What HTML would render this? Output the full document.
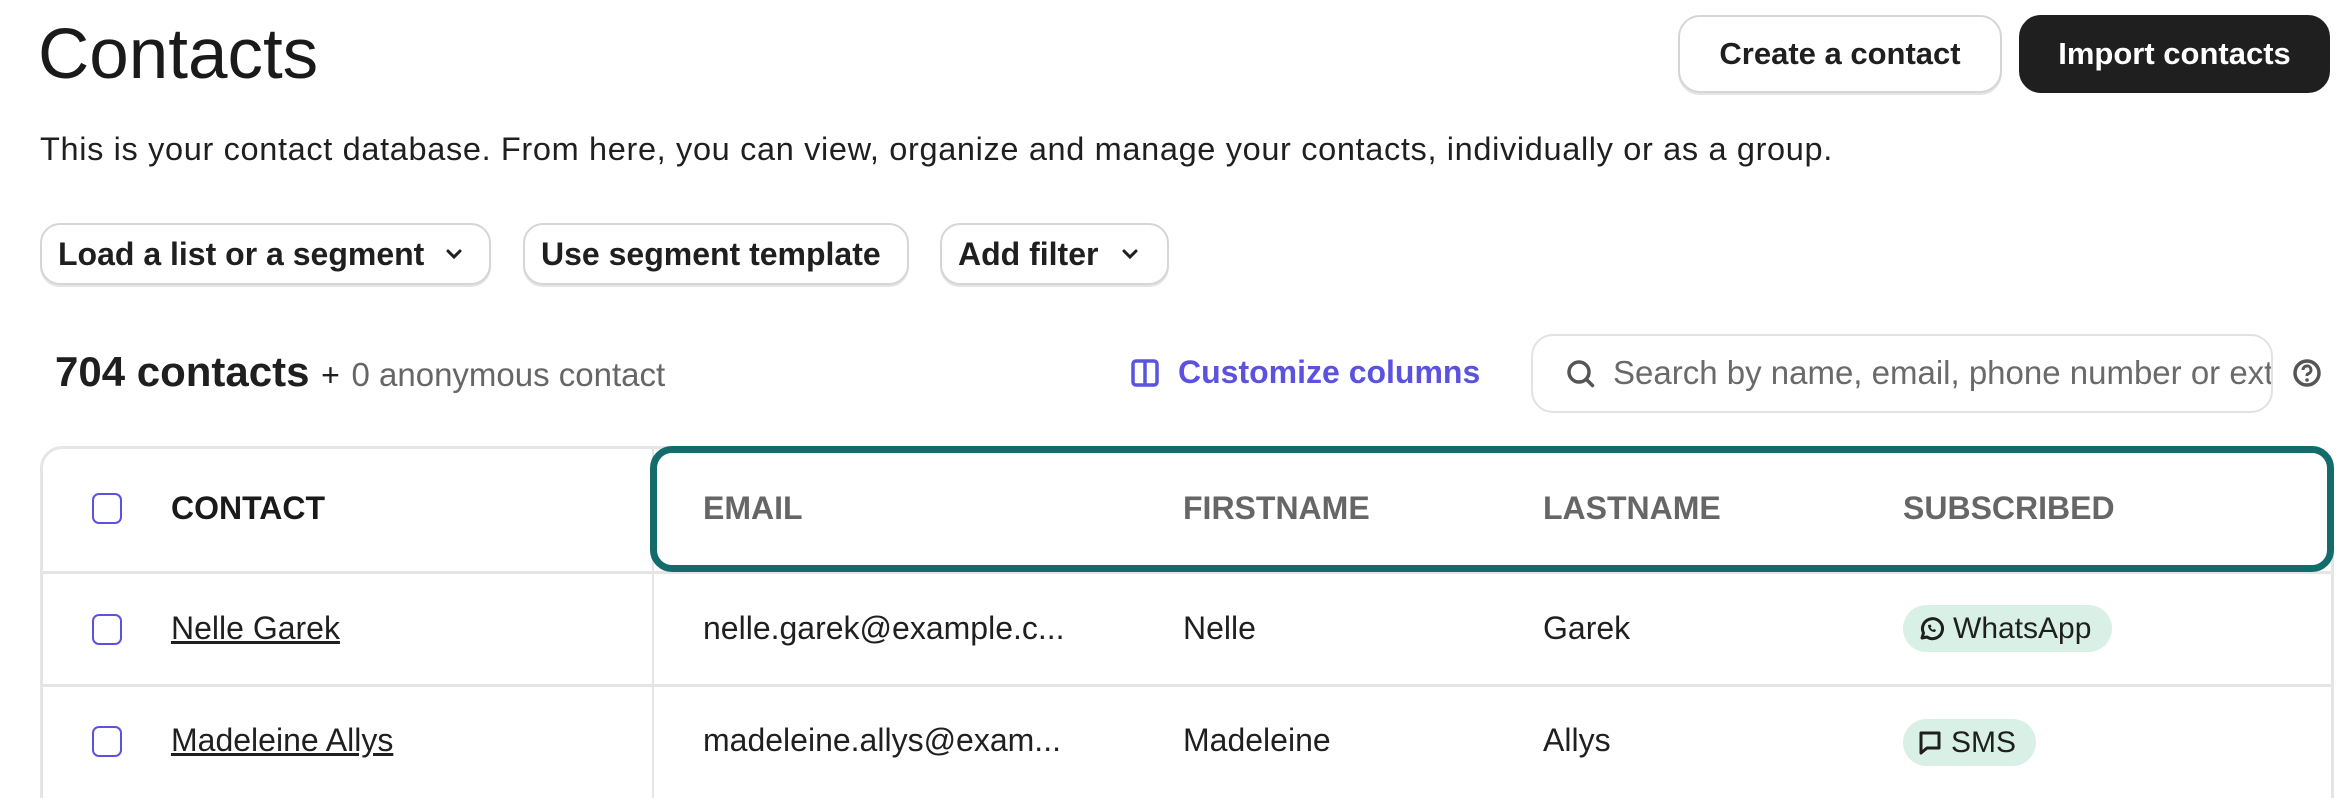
<!DOCTYPE html>
<html style="height:798px;overflow:hidden"><head><meta charset="utf-8"><style>
*{box-sizing:border-box;margin:0;padding:0}
body{width:2350px;height:798px;background:#fff;font-family:"Liberation Sans",sans-serif;color:#1f1f1f;position:relative;overflow:hidden}
.a{position:absolute;white-space:nowrap}
.btn{position:absolute;border:2px solid #d6d6d6;border-radius:22px;background:#fff;font-weight:bold;font-size:31px;display:flex;align-items:center;justify-content:center;box-shadow:0 2px 0 #e4e4e4}
.fb{border-radius:20px;font-size:32px;justify-content:flex-start;padding-left:16px}
.hd{font-weight:bold;font-size:32px;color:#666;top:490px}
.cb{position:absolute;width:30px;height:31px;border:2px solid #5b52e0;border-radius:7px}
.cell{font-size:32px;color:#1f1f1f}
.pill{position:absolute;background:#d8f0e6;border-radius:24px;font-size:30px;display:flex;align-items:center;padding-left:14px;gap:8px}
</style></head><body>
<div class="a" style="left:38px;top:14px;font-size:71px;color:#1a1a1a">Contacts</div>
<div class="btn" style="left:1678px;top:15px;width:324px;height:78px">Create a contact</div>
<div class="btn" style="left:2019px;top:15px;width:311px;height:78px;background:#1f1f1f;color:#fff;border-color:#1f1f1f;box-shadow:none">Import contacts</div>
<div class="a" style="left:40px;top:131px;font-size:32.5px;letter-spacing:0.65px">This is your contact database. From here, you can view, organize and manage your contacts, individually or as a group.</div>
<div class="btn fb" style="left:40px;top:223px;width:451px;height:62px">Load a list or a segment<svg style="margin-left:20px" width="20" height="14" viewBox="0 0 20 14"><path d="M4 4l6 6 6-6" fill="none" stroke="#1f1f1f" stroke-width="3" stroke-linecap="round"/></svg></div>
<div class="btn fb" style="left:523px;top:223px;width:386px;height:62px">Use segment template</div>
<div class="btn fb" style="left:940px;top:223px;width:229px;height:62px">Add filter<svg style="margin-left:22px" width="20" height="14" viewBox="0 0 20 14"><path d="M4 4l6 6 6-6" fill="none" stroke="#1f1f1f" stroke-width="3" stroke-linecap="round"/></svg></div>
<div class="a" style="left:55px;top:348px;font-size:42px;font-weight:bold">704 contacts <span style="font-size:32px;font-weight:normal">+</span> <span style="font-size:33px;font-weight:normal;color:#666">0 anonymous contact</span></div>
<svg class="a" style="left:1130px;top:358px" width="30" height="30" viewBox="0 0 30 30"><rect x="3" y="3" width="24" height="24" rx="3" fill="none" stroke="#5b52e0" stroke-width="3.5"/><path d="M15 3v24" stroke="#5b52e0" stroke-width="3.5"/></svg>
<div class="a" style="left:1178px;top:354px;font-size:32px;font-weight:bold;color:#5b52e0">Customize columns</div>
<div class="a" style="left:1531px;top:334px;width:742px;height:79px;border:2px solid #e2e2e2;border-radius:22px;overflow:hidden">
<svg class="a" style="left:32px;top:22px" width="32" height="32" viewBox="0 0 32 32"><circle cx="14" cy="14" r="10" fill="none" stroke="#555" stroke-width="3.5"/><path d="M21.5 21.5l6 6" stroke="#555" stroke-width="3.5" stroke-linecap="round"/></svg>
<div class="a" style="left:80px;top:18px;font-size:33px;color:#6a6a6a">Search by name, email, phone number or ext</div></div>
<svg class="a" style="left:2291px;top:357px" width="32" height="32" viewBox="0 0 32 32"><circle cx="16" cy="16" r="12" fill="none" stroke="#555" stroke-width="3.5"/><path d="M12 13a4 4 0 1 1 5 3.8c-1 .4-1 1-1 2.2" fill="none" stroke="#555" stroke-width="3"/><circle cx="16" cy="23" r="1.8" fill="#555"/></svg>
<div class="a" style="left:40px;top:446px;width:2294px;height:380px;border:3px solid #e5e5e5;border-radius:22px"></div>
<div class="a" style="left:40px;top:571px;width:2294px;height:3px;background:#e5e5e5"></div>
<div class="a" style="left:40px;top:684px;width:2294px;height:3px;background:#e5e5e5"></div>
<div class="a" style="left:652px;top:446px;width:2px;height:380px;background:#e5e5e5"></div>
<div class="a" style="left:650px;top:446px;width:1684px;height:126px;border:7px solid #136b6b;border-radius:22px;background:#fff"></div>
<div class="cb" style="left:92px;top:493px"></div>
<div class="a hd" style="left:171px;color:#1a1a1a">CONTACT</div>
<div class="a hd" style="left:703px">EMAIL</div>
<div class="a hd" style="left:1183px">FIRSTNAME</div>
<div class="a hd" style="left:1543px">LASTNAME</div>
<div class="a hd" style="left:1903px">SUBSCRIBED</div>
<div class="cb" style="left:92px;top:614px"></div>
<div class="a cell" style="left:171px;top:610px;text-decoration:underline">Nelle Garek</div>
<div class="a cell" style="left:703px;top:610px">nelle.garek@example.c...</div>
<div class="a cell" style="left:1183px;top:610px">Nelle</div>
<div class="a cell" style="left:1543px;top:610px">Garek</div>
<div class="pill" style="left:1903px;top:605px;width:209px;height:47px"><svg width="28" height="28" viewBox="0 0 28 28"><path d="M5 23l1.5-5A10 10 0 1 1 10 22z" fill="none" stroke="#1f1f1f" stroke-width="3" stroke-linejoin="round"/><path d="M11 10c0 4 3 7 7 7l1-2-2-1-1 1c-1-.5-2-1.5-2.5-2.5l1-1-1-2-2 .5z" fill="#1f1f1f"/></svg>WhatsApp</div>
<div class="cb" style="left:92px;top:726px"></div>
<div class="a cell" style="left:171px;top:722px;text-decoration:underline">Madeleine Allys</div>
<div class="a cell" style="left:703px;top:722px">madeleine.allys@exam...</div>
<div class="a cell" style="left:1183px;top:722px">Madeleine</div>
<div class="a cell" style="left:1543px;top:722px">Allys</div>
<div class="pill" style="left:1903px;top:719px;width:133px;height:47px"><svg width="26" height="28" viewBox="0 0 26 28"><path d="M4 4h18v15H10l-6 5z" fill="none" stroke="#1f1f1f" stroke-width="3" stroke-linejoin="round"/></svg>SMS</div>
</body></html>
